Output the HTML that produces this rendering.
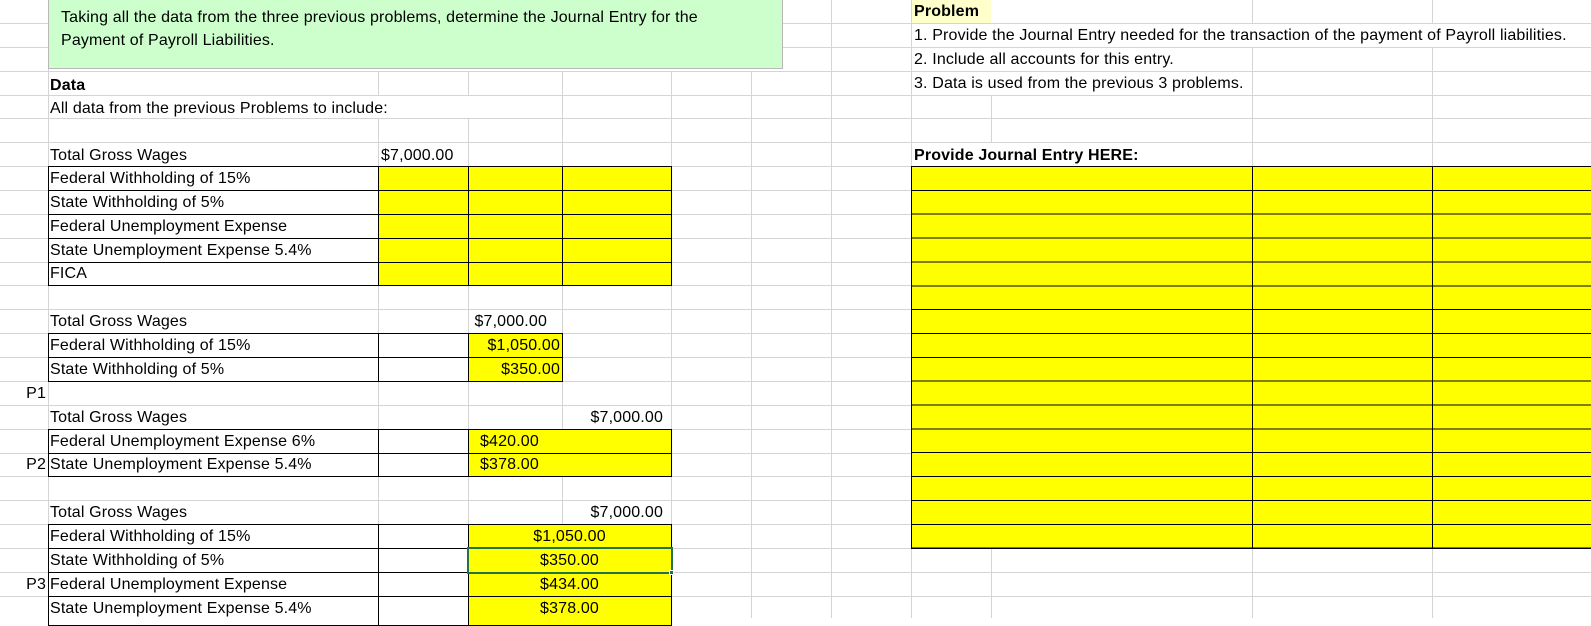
<!DOCTYPE html>
<html><head><meta charset="utf-8"><style>
*{margin:0;padding:0;box-sizing:border-box}
body{width:1591px;height:618px;overflow:hidden;background:#fff;position:relative;font-family:"Liberation Sans",sans-serif;font-size:16px;letter-spacing:0.15px;color:#000}
.h{position:absolute;left:0;width:1591px;height:1px;background:#d4d4d4}
.v{position:absolute;width:1px;background:#d4d4d4}
.c{position:absolute;border:1px solid #000}
.y{background:#ffff00}
.t{position:absolute;height:24px;line-height:29px;white-space:nowrap}
.b{font-weight:bold}
.r{text-align:right}
.m{text-align:center}
</style></head><body>
<div class="h" style="top:23px"></div><div class="h" style="top:47px"></div><div class="h" style="top:71px"></div><div class="h" style="top:95px"></div><div class="h" style="top:118px"></div><div class="h" style="top:142px"></div><div class="h" style="top:166px"></div><div class="h" style="top:190px"></div><div class="h" style="top:214px"></div><div class="h" style="top:238px"></div><div class="h" style="top:262px"></div><div class="h" style="top:285px"></div><div class="h" style="top:309px"></div><div class="h" style="top:333px"></div><div class="h" style="top:357px"></div><div class="h" style="top:381px"></div><div class="h" style="top:405px"></div><div class="h" style="top:429px"></div><div class="h" style="top:453px"></div><div class="h" style="top:476px"></div><div class="h" style="top:500px"></div><div class="h" style="top:524px"></div><div class="h" style="top:548px"></div><div class="h" style="top:572px"></div><div class="h" style="top:596px"></div>
<div class="v" style="left:48px;top:0;height:618px"></div>
<div class="v" style="left:378px;top:71px;height:24px"></div>
<div class="v" style="left:378px;top:118px;height:500px"></div>
<div class="v" style="left:468px;top:71px;height:547px"></div>
<div class="v" style="left:562px;top:71px;height:547px"></div>
<div class="v" style="left:671px;top:71px;height:547px"></div>
<div class="v" style="left:751px;top:71px;height:547px"></div>
<div class="v" style="left:831px;top:0;height:618px"></div>
<div class="v" style="left:911px;top:0;height:618px"></div>
<div class="v" style="left:991px;top:95px;height:47px"></div>
<div class="v" style="left:991px;top:548px;height:70px"></div>
<div class="v" style="left:1252px;top:0;height:23px"></div>
<div class="v" style="left:1252px;top:47px;height:571px"></div>
<div class="v" style="left:1432px;top:0;height:618px"></div>

<div style="position:absolute;left:48px;top:0;width:735px;height:69px;background:#ccffcc;border:1px solid #b8b8b8;border-top:none"></div>
<div class="t" style="left:61px;top:3px">Taking all the data from the three previous problems, determine the Journal Entry for the</div>
<div class="t" style="left:61px;top:26px">Payment of Payroll Liabilities.</div>

<div style="position:absolute;left:912px;top:0;width:79px;height:23px;background:#ffffcc"></div>
<div class="t b" style="left:914px;top:-3px">Problem</div>
<div style="position:absolute;left:912px;top:24px;width:679px;height:23px;background:#fff"></div>
<div class="t" style="left:914px;top:21px">1. Provide the Journal Entry needed for the transaction of the payment of Payroll liabilities.</div>
<div class="t" style="left:914px;top:45px">2. Include all accounts for this entry.</div>
<div class="t" style="left:914px;top:69px">3. Data is used from the previous 3 problems.</div>
<div class="t b" style="left:914px;top:141px">Provide Journal Entry HERE:</div>

<div class="t b" style="left:50px;top:71px">Data</div>
<div style="position:absolute;left:49px;top:96px;width:420px;height:22px;background:#fff"></div>
<div class="t" style="left:50px;top:94px">All data from the previous Problems to include:</div>
<div class="t" style="left:50px;top:141px">Total Gross Wages</div>
<div class="t" style="left:381px;top:141px">$7,000.00</div>

<div class="c" style="left:48px;top:166px;width:331px;height:25px"></div>
<div class="c" style="left:48px;top:190px;width:331px;height:25px"></div>
<div class="c" style="left:48px;top:214px;width:331px;height:25px"></div>
<div class="c" style="left:48px;top:238px;width:331px;height:25px"></div>
<div class="c" style="left:48px;top:262px;width:331px;height:24px"></div>
<div class="c y" style="left:378px;top:166px;width:91px;height:25px"></div><div class="c y" style="left:468px;top:166px;width:95px;height:25px"></div><div class="c y" style="left:562px;top:166px;width:110px;height:25px"></div>
<div class="c y" style="left:378px;top:190px;width:91px;height:25px"></div><div class="c y" style="left:468px;top:190px;width:95px;height:25px"></div><div class="c y" style="left:562px;top:190px;width:110px;height:25px"></div>
<div class="c y" style="left:378px;top:214px;width:91px;height:25px"></div><div class="c y" style="left:468px;top:214px;width:95px;height:25px"></div><div class="c y" style="left:562px;top:214px;width:110px;height:25px"></div>
<div class="c y" style="left:378px;top:238px;width:91px;height:25px"></div><div class="c y" style="left:468px;top:238px;width:95px;height:25px"></div><div class="c y" style="left:562px;top:238px;width:110px;height:25px"></div>
<div class="c y" style="left:378px;top:262px;width:91px;height:24px"></div><div class="c y" style="left:468px;top:262px;width:95px;height:24px"></div><div class="c y" style="left:562px;top:262px;width:110px;height:24px"></div>
<div class="t" style="left:50px;top:164px">Federal Withholding of 15%</div>
<div class="t" style="left:50px;top:188px">State Withholding of 5%</div>
<div class="t" style="left:50px;top:212px">Federal Unemployment Expense</div>
<div class="t" style="left:50px;top:236px">State Unemployment Expense 5.4%</div>
<div class="t" style="left:50px;top:259px">FICA</div>

<div class="t" style="left:50px;top:307px">Total Gross Wages</div>
<div class="t r" style="left:458px;top:307px;width:89px">$7,000.00</div>
<div class="c" style="left:48px;top:333px;width:331px;height:25px"></div><div class="c" style="left:378px;top:333px;width:91px;height:25px"></div><div class="c y" style="left:468px;top:333px;width:95px;height:25px"></div>
<div class="c" style="left:48px;top:357px;width:331px;height:25px"></div><div class="c" style="left:378px;top:357px;width:91px;height:25px"></div><div class="c y" style="left:468px;top:357px;width:95px;height:25px"></div>
<div class="t" style="left:50px;top:331px">Federal Withholding of 15%</div>
<div class="t r" style="left:458px;top:331px;width:102px">$1,050.00</div>
<div class="t" style="left:50px;top:355px">State Withholding of 5%</div>
<div class="t r" style="left:458px;top:355px;width:102px">$350.00</div>
<div class="t r" style="left:0;top:379px;width:46px">P1</div>

<div class="t" style="left:50px;top:403px">Total Gross Wages</div>
<div class="t r" style="left:552px;top:403px;width:111px">$7,000.00</div>
<div class="c" style="left:48px;top:429px;width:331px;height:25px"></div><div class="c" style="left:378px;top:429px;width:91px;height:25px"></div><div class="c y" style="left:468px;top:429px;width:204px;height:25px"></div>
<div class="c" style="left:48px;top:453px;width:331px;height:24px"></div><div class="c" style="left:378px;top:453px;width:91px;height:24px"></div><div class="c y" style="left:468px;top:453px;width:204px;height:24px"></div>
<div class="t" style="left:50px;top:427px">Federal Unemployment Expense 6%</div>
<div class="t" style="left:480px;top:427px">$420.00</div>
<div class="t r" style="left:0;top:450px;width:46px">P2</div>
<div class="t" style="left:50px;top:450px">State Unemployment Expense 5.4%</div>
<div class="t" style="left:480px;top:450px">$378.00</div>

<div class="t" style="left:50px;top:498px">Total Gross Wages</div>
<div class="t r" style="left:552px;top:498px;width:111px">$7,000.00</div>
<div class="c" style="left:48px;top:524px;width:331px;height:25px"></div><div class="c" style="left:378px;top:524px;width:91px;height:25px"></div><div class="c y" style="left:468px;top:524px;width:204px;height:25px"></div>
<div class="c" style="left:48px;top:548px;width:331px;height:25px"></div><div class="c" style="left:378px;top:548px;width:91px;height:25px"></div><div class="c y" style="left:468px;top:548px;width:204px;height:25px"></div>
<div class="c" style="left:48px;top:572px;width:331px;height:25px"></div><div class="c" style="left:378px;top:572px;width:91px;height:25px"></div><div class="c y" style="left:468px;top:572px;width:204px;height:25px"></div>
<div class="c" style="left:48px;top:596px;width:331px;height:30px"></div><div class="c" style="left:378px;top:596px;width:91px;height:30px"></div><div class="c y" style="left:468px;top:596px;width:204px;height:30px"></div>
<div style="position:absolute;left:467px;top:547px;width:206px;height:27px;border:2px solid #217346"></div>
<div style="position:absolute;left:669px;top:570px;width:5px;height:5px;background:#217346;border:1px solid #fff"></div>
<div class="t" style="left:50px;top:522px">Federal Withholding of 15%</div>
<div class="t m" style="left:468px;top:522px;width:203px">$1,050.00</div>
<div class="t" style="left:50px;top:546px">State Withholding of 5%</div>
<div class="t m" style="left:468px;top:546px;width:203px">$350.00</div>
<div class="t r" style="left:0;top:570px;width:46px">P3</div>
<div class="t" style="left:50px;top:570px">Federal Unemployment Expense</div>
<div class="t m" style="left:468px;top:570px;width:203px">$434.00</div>
<div class="t" style="left:50px;top:594px">State Unemployment Expense 5.4%</div>
<div class="t m" style="left:468px;top:594px;width:203px">$378.00</div>

<div style="position:absolute;left:911px;top:166px;width:690px;height:383px;background:#ffff00;border:1px solid #000;border-right:none;
background-image:repeating-linear-gradient(to bottom,transparent 0,transparent 22.85px,#000 22.85px,#000 23.85px)"></div>
<div style="position:absolute;left:1252px;top:166px;width:1px;height:383px;background:#000"></div>
<div style="position:absolute;left:1432px;top:166px;width:1px;height:383px;background:#000"></div>
</body></html>
